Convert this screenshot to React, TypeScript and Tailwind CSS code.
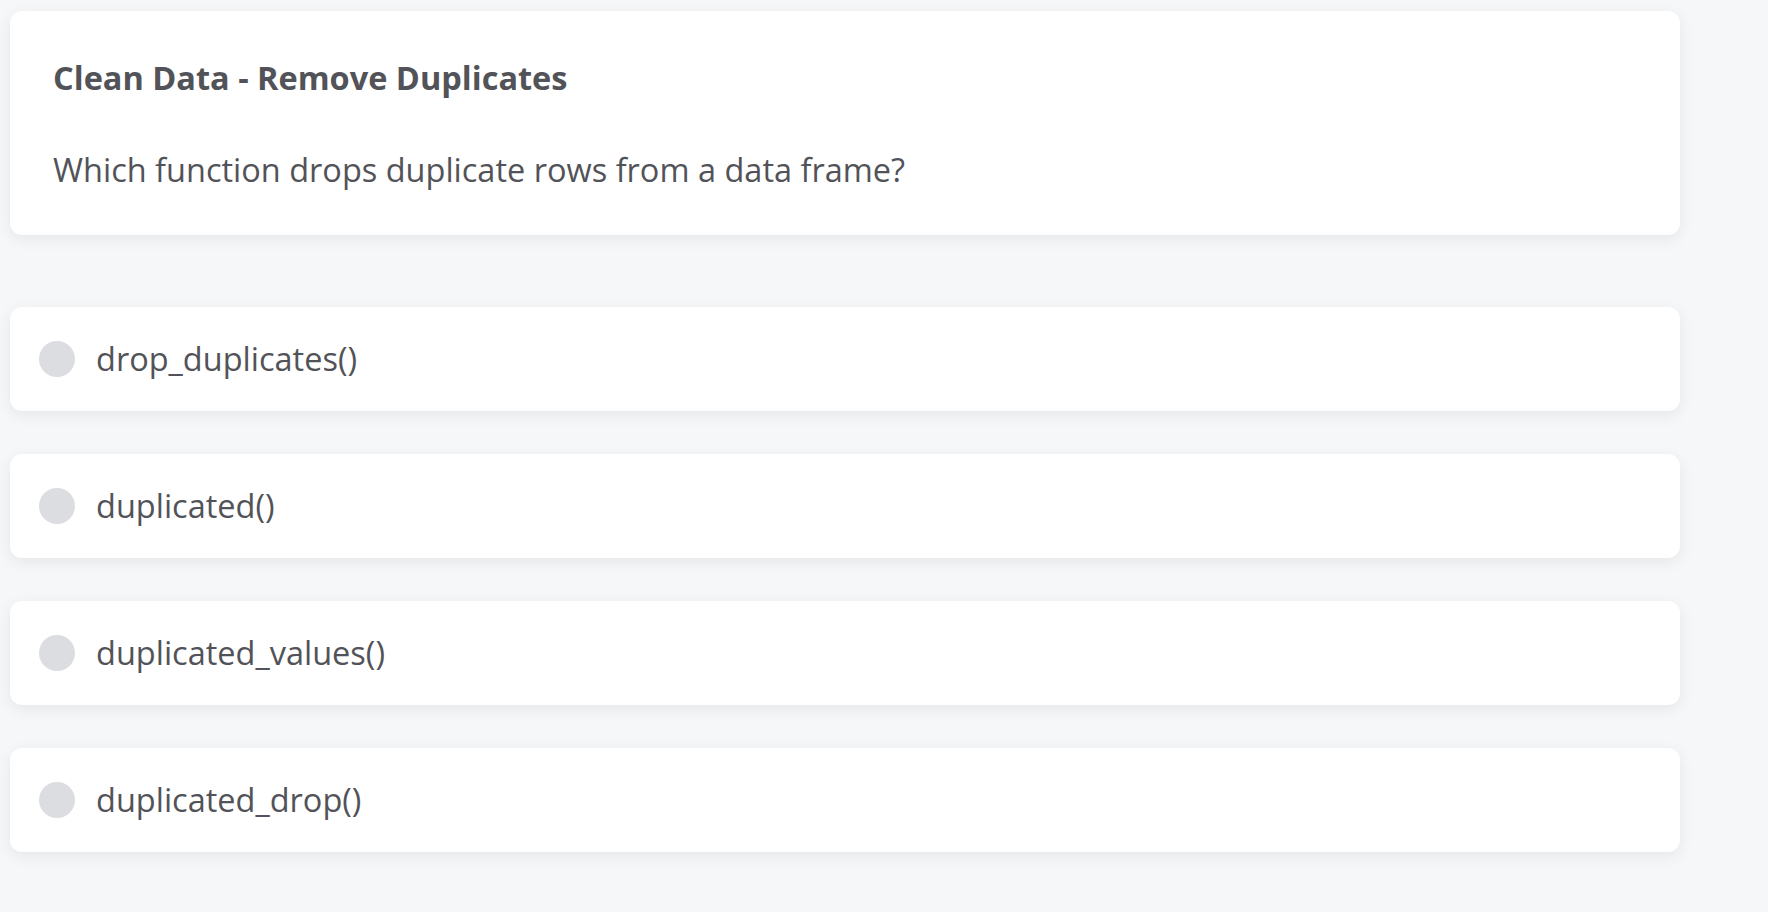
/**
 * Quiz question view - one multiple choice question with its answers.
 */

const options = [
  "drop_duplicates()",
  "duplicated()",
  "duplicated_values()",
  "duplicated_drop()",
];

function OptionRow({ label }: { label: string }) {
  return (
    <div className="flex h-[104px] items-center gap-[21px] rounded-[12px] bg-white pl-[29px] shadow-[0_4px_16px_rgba(0,0,0,0.07)]">
      <span className="h-[36px] w-[36px] shrink-0 rounded-full bg-[#dcdde0]"></span>
      <span className="text-[32.5px] leading-[48px] text-[#525358]">{label}</span>
    </div>
  );
}

export default function App() {
  return (
    <div
      className="min-h-screen bg-[#f6f7f9] pl-[10px] pt-[11px]"
      style={{ fontFamily: '"Open Sans", "Noto Sans", sans-serif' }}
    >
      <div className="w-[1670px]">
        {/* Question card */}
        <div className="rounded-[12px] bg-white pb-[41px] pl-[43px] pt-[43px] shadow-[0_4px_16px_rgba(0,0,0,0.07)]">
          <h1 className="text-[32.5px] font-bold leading-[48px] text-[#525358]">
            Clean Data - Remove Duplicates
          </h1>
          <p className="mt-[44px] text-[32.5px] leading-[48px] text-[#525358]">
            Which function drops duplicate rows from a data frame?
          </p>
        </div>

        {/* Answers */}
        <div className="mt-[72px] flex flex-col gap-[43px]">
          {options.map((opt) => (
            <OptionRow key={opt} label={opt} />
          ))}
        </div>
      </div>
    </div>
  );
}
